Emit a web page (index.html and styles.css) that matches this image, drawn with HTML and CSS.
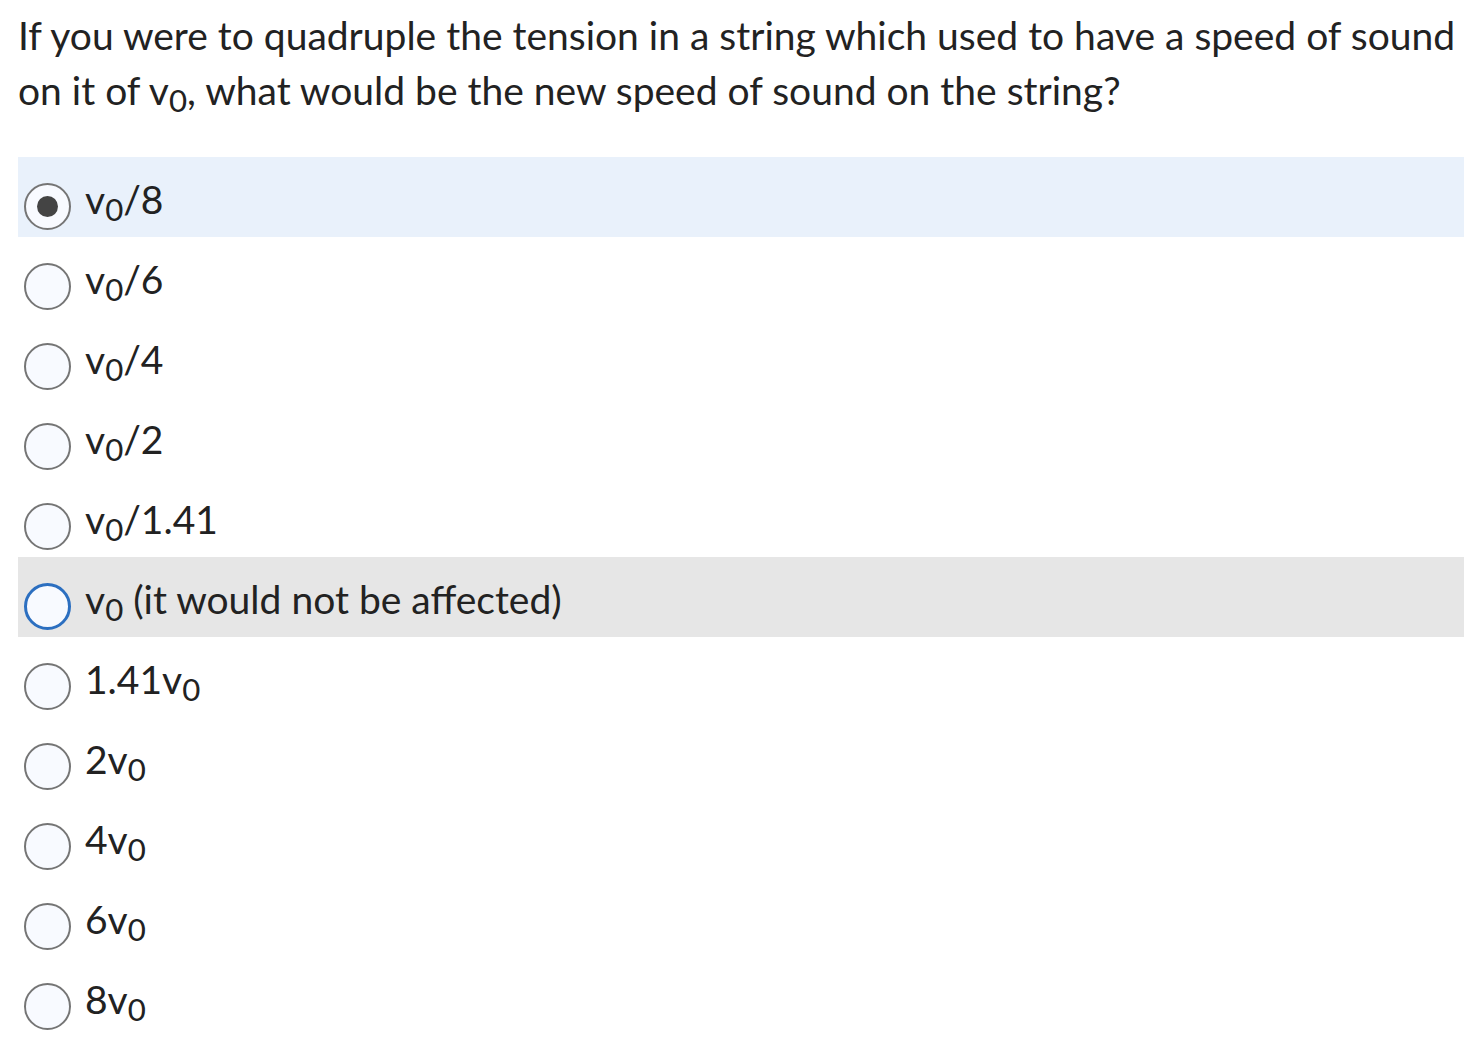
FILE: index.html
```html
<!DOCTYPE html>
<html lang="en">
<head>
<meta charset="utf-8">
<title>Question</title>
<link rel="stylesheet" href="styles.css">
</head>
<body>
<div class="page">
  <p class="question">If you were to quadruple the tension in a string which used to have a speed of sound on it of v<sub>0</sub>, what would be the new speed of sound on the string?</p>
  <div class="options">
    <div class="option selected"><span class="radio checked"></span><span class="label">v<sub>0</sub>/8</span></div>
    <div class="option"><span class="radio"></span><span class="label">v<sub>0</sub>/6</span></div>
    <div class="option"><span class="radio"></span><span class="label">v<sub>0</sub>/4</span></div>
    <div class="option"><span class="radio"></span><span class="label">v<sub>0</sub>/2</span></div>
    <div class="option"><span class="radio"></span><span class="label">v<sub>0</sub>/1.41</span></div>
    <div class="option hover"><span class="radio focus"></span><span class="label">v<sub>0</sub> (it would not be affected)</span></div>
    <div class="option"><span class="radio"></span><span class="label">1.41v<sub>0</sub></span></div>
    <div class="option"><span class="radio"></span><span class="label">2v<sub>0</sub></span></div>
    <div class="option"><span class="radio"></span><span class="label">4v<sub>0</sub></span></div>
    <div class="option"><span class="radio"></span><span class="label">6v<sub>0</sub></span></div>
    <div class="option"><span class="radio"></span><span class="label">8v<sub>0</sub></span></div>
  </div>
</div>
</body>
</html>
```
FILE: styles.css
```css
html, body {
  margin: 0;
  padding: 0;
  background: #ffffff;
}
body {
  font-family: Lato, "Noto Sans", sans-serif;
  color: #222222;
}
.page {
  padding: 8px 16px 0 18px;
}
.question {
  margin: 0;
  font-size: 39px;
  line-height: 55px;
}
sub {
  font-size: 0.8em;
  line-height: 0;
  vertical-align: -0.24em;
}
.options {
  margin-top: 39px;
  display: flex;
  flex-direction: column;
}
.option {
  height: 80px;
  box-sizing: border-box;
  display: flex;
  align-items: flex-start;
  padding-top: 24px;
  padding-left: 6px;
}
.option.selected {
  background: #e9f1fb;
}
.option.hover {
  background: #e6e6e6;
}
.radio {
  width: 47px;
  height: 47px;
  margin-top: 2px;
  box-sizing: border-box;
  border-radius: 50%;
  border: 2px solid #757575;
  background: #f8faff;
  display: flex;
  align-items: center;
  justify-content: center;
  flex: none;
}
.radio.checked::after {
  content: "";
  width: 21px;
  height: 21px;
  border-radius: 50%;
  background: #444444;
}
.radio.focus {
  border: 3px solid #2c6fc0;
}
.label {
  margin-left: 14px;
  margin-top: 0;
  font-size: 39px;
  line-height: 36px;
}
```
